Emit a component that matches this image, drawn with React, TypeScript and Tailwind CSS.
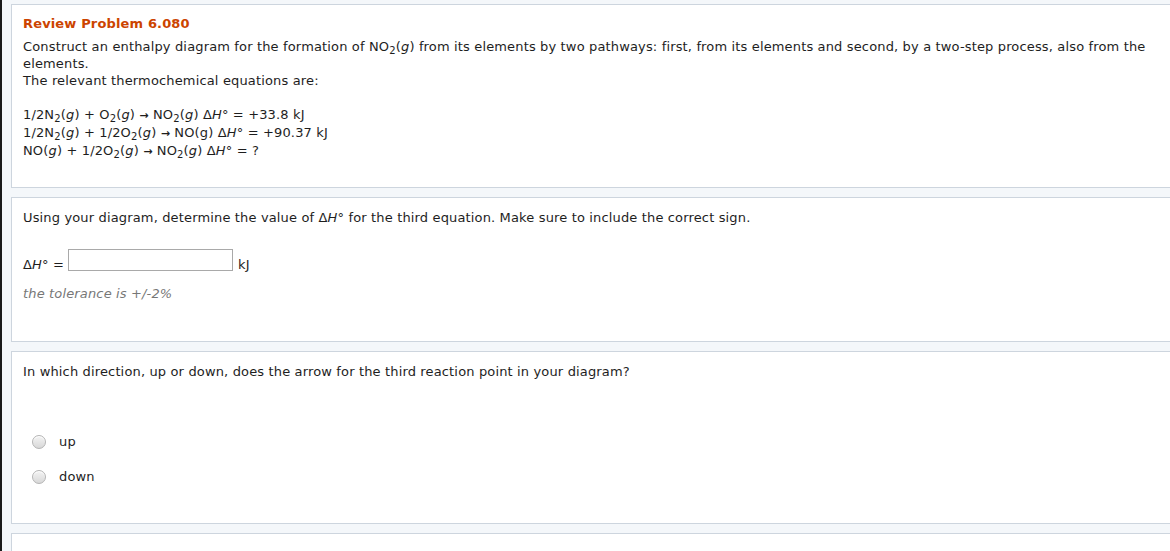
import React from 'react';

const font = { fontFamily: 'Verdana, "DejaVu Sans", sans-serif' };

const G = () => <i>g</i>;
const DH = () => (
  <>
    Δ<i>H</i>°
  </>
);
const Arrow = () => <span className="text-[11px] font-bold">→</span>;
const Sub = ({ children }: { children: React.ReactNode }) => (
  <span className="inline-block text-[10px] leading-[10px] translate-y-[3px]">{children}</span>
);

const Radio = ({ label }: { label: string }) => (
  <label className="flex items-center gap-[13px]">
    <span className="w-[14px] h-[14px] rounded-full border border-[#b4b4b4] bg-gradient-to-b from-[#f4f4f4] to-[#d8d8d8] shadow-[inset_0_1px_0_#fff]" />
    <span>{label}</span>
  </label>
);

export default function App() {
  return (
    <div
      className="w-[1170px] h-[551px] overflow-hidden bg-[#f4f7fa] border-l-2 border-[#1a1a1a] pl-[9px] pt-[4px] text-[13px] leading-[17px] tracking-[0.15px] text-[#1e1e1e]"
      style={font}
    >
      <div className="w-[1200px] flex flex-col gap-[9px]">
        {/* Problem statement */}
        <div className="h-[184px] bg-white border border-[#cdd5de] pl-[11px] pr-[40px] pt-[10px]">
          <h2 className="font-bold text-[#cc4400]">Review Problem 6.080</h2>
          <p className="mt-[6px]">
            Construct an enthalpy diagram for the formation of NO<Sub>2</Sub>(<G />) from its elements by two pathways: first, from its elements and second, by a two-step process, also from the elements.
            <br />
            The relevant thermochemical equations are:
          </p>
          <div className="mt-[17px]">
            <p>
              1/2N<Sub>2</Sub>(<G />) + O<Sub>2</Sub>(<G />) <Arrow /> NO<Sub>2</Sub>(<G />) <DH /> = +33.8 kJ
            </p>
            <p>
              1/2N<Sub>2</Sub>(<G />) + 1/2O<Sub>2</Sub>(<G />) <Arrow /> NO(g) <DH /> = +90.37 kJ
            </p>
            <p>
              NO(<G />) + 1/2O<Sub>2</Sub>(<G />) <Arrow /> NO<Sub>2</Sub>(<G />) <DH /> = ?
            </p>
          </div>
        </div>

        {/* Answer entry */}
        <div className="h-[145px] bg-white border border-[#cdd5de] pl-[11px] pt-[11px]">
          <p>
            Using your diagram, determine the value of <DH /> for the third equation. Make sure to include the correct sign.
          </p>
          <div className="flex items-start mt-[23px]">
            <span className="mt-[7px] w-[45px]">
              <DH /> =
            </span>
            <input
              type="text"
              className="w-[165px] h-[22px] border border-[#a9a9a9] bg-white outline-none"
            />
            <span className="mt-[7px] ml-[5px]">kJ</span>
          </div>
          <p className="mt-[12px] italic text-[#777]">the tolerance is +/-2%</p>
        </div>

        {/* Direction question */}
        <div className="h-[173px] bg-white border border-[#cdd5de] pl-[11px] pt-[11px]">
          <p>In which direction, up or down, does the arrow for the third reaction point in your diagram?</p>
          <div className="mt-[53px] ml-[9px] flex flex-col gap-[18px]">
            <Radio label="up" />
            <Radio label="down" />
          </div>
        </div>

        <div className="h-[40px] bg-white border border-[#cdd5de]" />
      </div>
    </div>
  );
}
